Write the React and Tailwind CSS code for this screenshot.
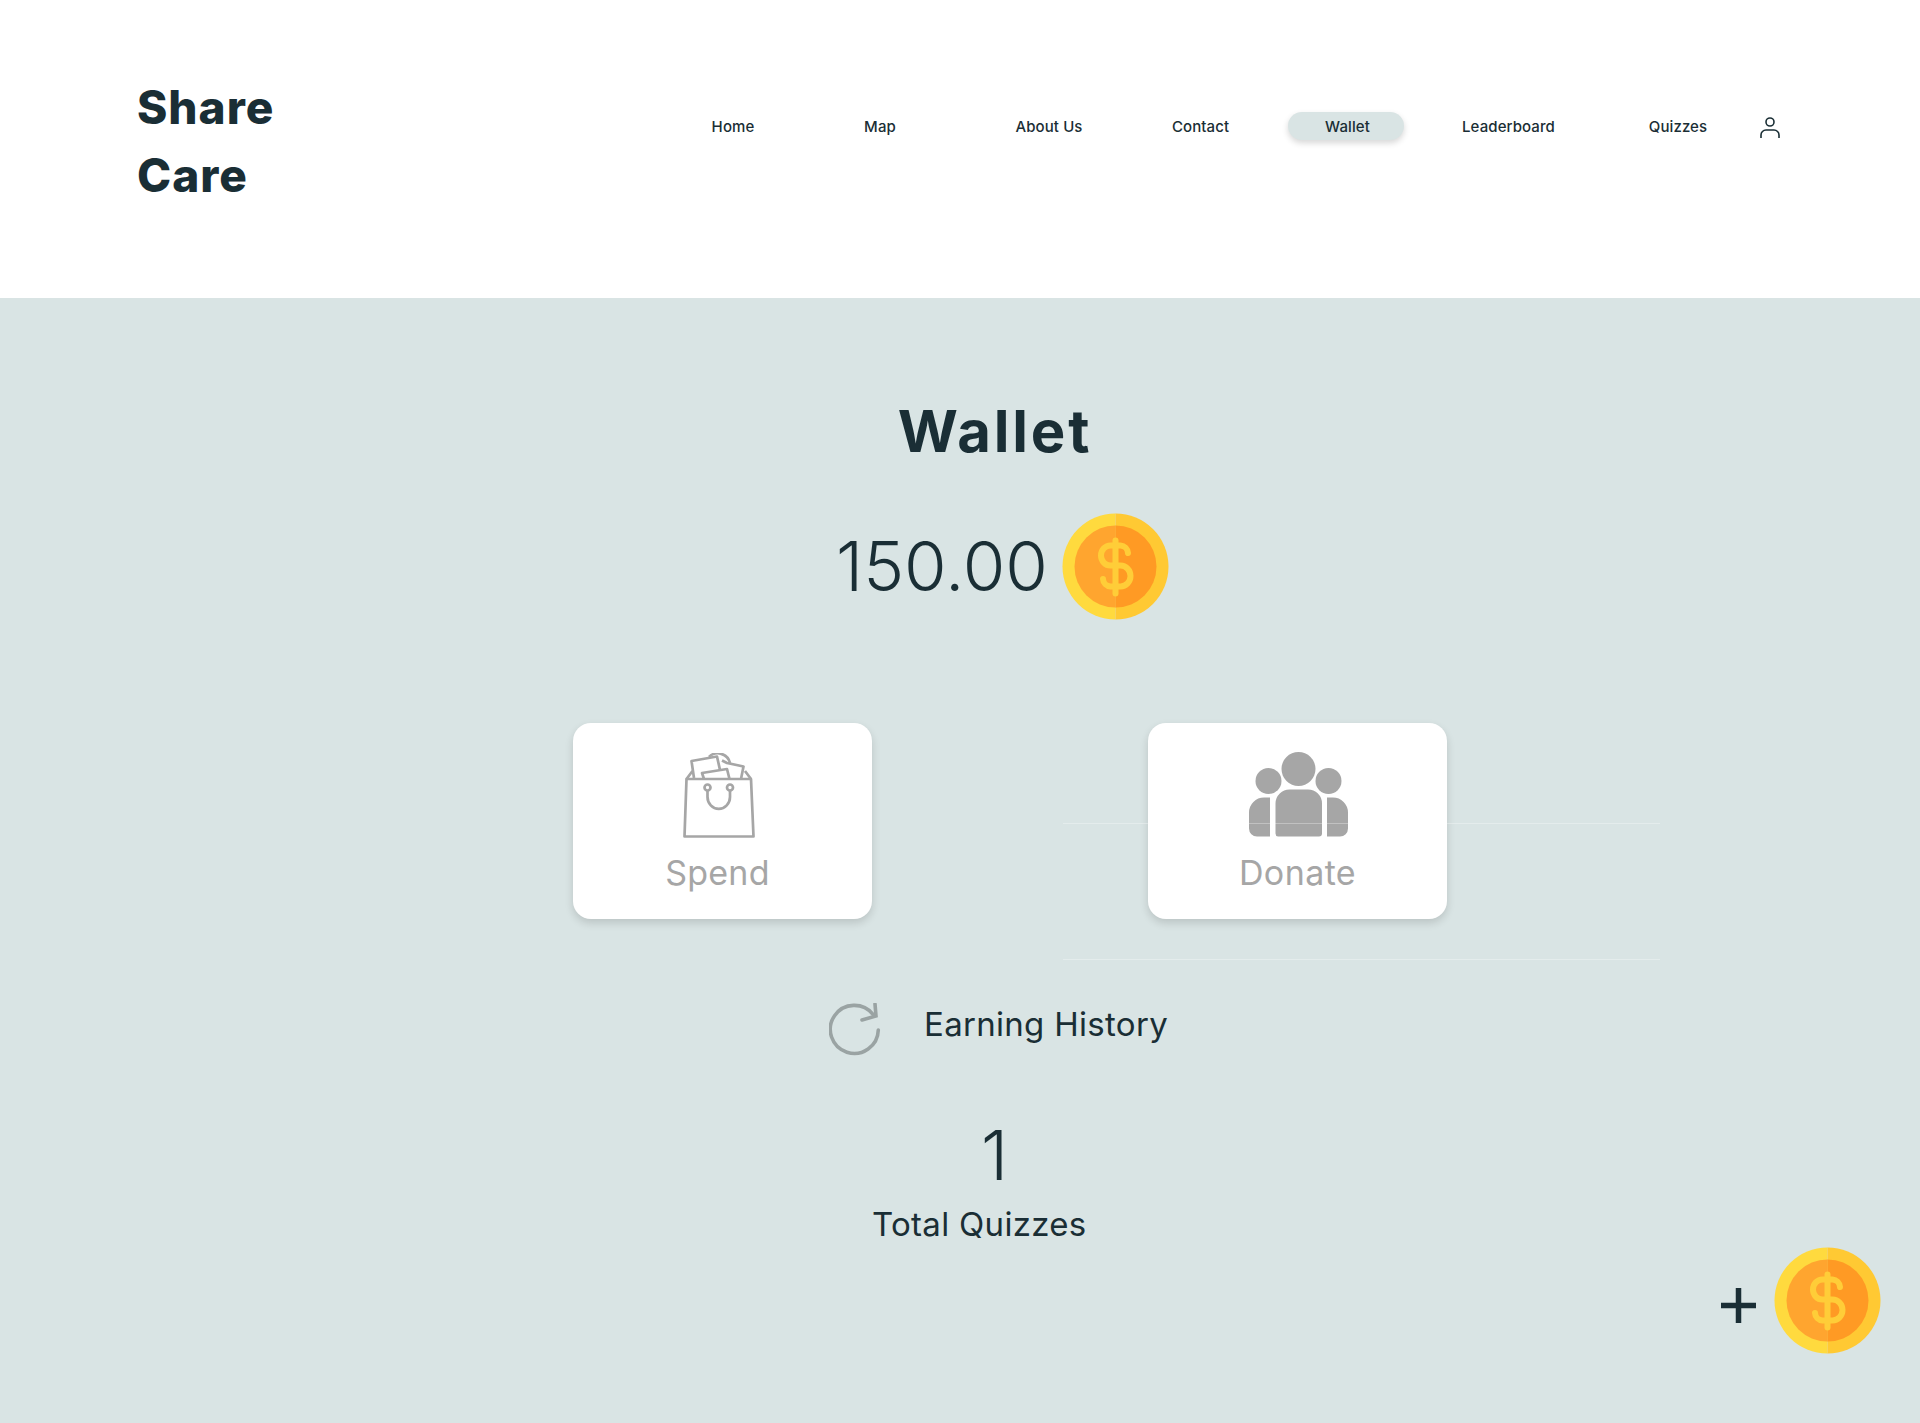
const font = "font-['Inter','Liberation_Sans',sans-serif]";

function Coin({ className }) {
  return (
    <svg viewBox="0 0 107 107" className={className}>
      <path d="M53.500 0.500a53 53 0 0 0 0 106z" fill="#ffda3e" />
      <path d="M53.500 0.500a53 53 0 0 1 0 106z" fill="#ffc933" />
      <path d="M53.500 12.500a41 41 0 0 0 0 82z" fill="#ffa52f" />
      <path d="M53.500 12.500a41 41 0 0 1 0 82z" fill="#ff9a24" />
      <g transform="translate(53.5 53.5)" fill="none" stroke="#ffcd38" strokeWidth="6" strokeLinecap="round">
        <path d="M0 -26V27" />
        <path d="M12.500 -13.500A8 8 0 0 0 5 -21H-5A9.500 10 0 0 0 -5 -1H5A10 10.500 0 0 1 5 20H-5A8 8 0 0 1 -12.500 12.500" />
      </g>
    </svg>
  );
}

function BagIcon() {
  return (
    <svg viewBox="0 0 72 85" className="w-[72px] h-[85px]" fill="none" stroke="#a6a6a6" strokeWidth="2.700" strokeLinejoin="round">
      <path d="M1.500 83.500L3.500 26H68L70.500 83.500Z" />
      <path d="M3.500 26L9.500 18M68 26L62 18" />
      <path d="M11 25L8.500 8L34 3.500L37 17" />
      <path d="M21 26L19 20L44 16L46.500 26" />
      <path d="M39 7.500L44 10L60.500 13.500L58 26" />
      <path d="M26 4A12.500 12.500 0 0 1 47 10" />
      <circle cx="24.500" cy="34.500" r="3" />
      <circle cx="47" cy="34.500" r="3" />
      <path d="M24.500 37.500V44A11.200 11.800 0 0 0 47 44V37.500" />
    </svg>
  );
}

function PeopleIcon() {
  return (
    <svg viewBox="0 0 99 85" className="w-[99px] h-[85px]" fill="#a6a6a6">
      <circle cx="49.500" cy="17" r="17" />
      <circle cx="19.500" cy="29" r="13" />
      <circle cx="79.500" cy="29" r="13" />
      <path d="M41 37.500H59A14 14 0 0 1 73 51.500V81.500A3 3 0 0 1 70 84.500H29A3 3 0 0 1 26.500 81.500V51.500A14 14 0 0 1 41 37.500Z" />
      <path d="M21 45.500V84.500H8A8 8 0 0 1 0 76.500V60.500A15 15 0 0 1 15 45.500Z" />
      <path d="M78 45.500V84.500H91A8 8 0 0 0 99 76.500V60.500A15 15 0 0 0 84 45.500Z" />
    </svg>
  );
}

function RefreshIcon() {
  return (
    <svg viewBox="0 0 52 53" className="w-[52px] h-[53px]" fill="none" stroke="#9aa3a3" strokeWidth="3.600" strokeLinecap="round">
      <path d="M49.300 27A24 24 0 1 1 44 11.300" />
      <path d="M46 1L47 13L33 17" />
    </svg>
  );
}

function UserIcon() {
  return (
    <svg viewBox="0 0 20 22" className="w-5 h-[22px]" fill="none" stroke="#1a2e35" strokeWidth="1.600">
      <circle cx="10" cy="5" r="4" />
      <path d="M1 21V18A5 5 0 0 1 6 13H14A5 5 0 0 1 19 18V21" />
    </svg>
  );
}

function NavItem({ children, className = "" }) {
  return (
    <a className={`flex items-center justify-center h-7 pt-[2px] text-[15px] font-medium text-[#1a2e35] tracking-[0.1px] ${className}`}>
      {children}
    </a>
  );
}

export default function App() {
  return (
    <div className={`${font} w-[1920px] h-[1423px] overflow-hidden bg-white text-[#1a2e35]`}>
      <header className="h-[298px] bg-white flex items-start pl-[137px] pt-[73px]">
        <div className="w-[552px] text-[46px] font-extrabold leading-[68px] tracking-[1px]">
          <div>Share</div>
          <div>Care</div>
        </div>
        <nav className="flex items-center mt-[39px]">
          <NavItem className="w-[88px]">Home</NavItem>
          <NavItem className="w-[206px]">Map</NavItem>
          <NavItem className="w-[130px] pl-[2px]">About Us</NavItem>
          <NavItem className="w-[175px]">Contact</NavItem>
          <NavItem className="w-[116px] pl-[3px] rounded-[14px] bg-[#d9e4e4] shadow-[0_3px_6px_rgba(0,0,0,0.16)]">Wallet</NavItem>
          <NavItem className="w-[209px]">Leaderboard</NavItem>
          <NavItem className="w-[128px] pl-[2px]">Quizzes</NavItem>
          <span className="ml-[19px] mt-1"><UserIcon /></span>
        </nav>
      </header>

      <main className="relative h-[1125px] bg-[#d9e4e4]">
        <h1 className="pl-[70px] pt-[98px] text-center text-[58px] font-bold leading-[70px] tracking-[2.800px]">Wallet</h1>
        <div className="flex items-center pl-[836px] mt-[47px]">
          <span className="w-[226px] text-[69px] font-[350] leading-[107px] tracking-[0px]">150.00</span>
          <Coin className="w-[107px] h-[107px]" />
        </div>
        <div className="flex pl-[573px] gap-[276px] mt-[103px]">
          <button className="w-[299px] h-[196px] rounded-[18px] bg-white shadow-[0_4px_8px_rgba(0,0,0,0.14)] flex flex-col items-center pt-[30px]">
            <span className="-ml-[7px] flex"><BagIcon /></span>
            <span className="-ml-[10px] text-[34px] leading-[50px] mt-[10px] tracking-[0.2px] text-[#a6a6a6]">Spend</span>
          </button>
          <button className="w-[299px] h-[196px] rounded-[18px] bg-white shadow-[0_4px_8px_rgba(0,0,0,0.14)] flex flex-col items-center pt-[29px]">
            <span className="ml-[2px] flex"><PeopleIcon /></span>
            <span className="text-[34px] leading-[50px] mt-[11px] tracking-[0.4px] text-[#a6a6a6]">Donate</span>
          </button>
        </div>
        <div className="flex items-center pl-[829px] mt-[84px]">
          <RefreshIcon />
          <span className="ml-[43px] mb-[12px] text-[33px] leading-[38px] tracking-[0.3px]">Earning History</span>
        </div>
        <div className="pl-[981px] mt-[56px] text-[69px] font-[350] leading-[86px]">1</div>
        <div className="pl-[872px] mt-[1px] text-[33px] leading-[50px] tracking-[0.3px]">Total Quizzes</div>
        <div className="absolute left-[1063px] top-[525px] w-[597px] h-[137px] border-y border-white/30 pointer-events-none" />
        <div className="absolute left-[1721px] top-[949px] flex items-center">
          <span className="relative flex w-[35px] h-[35px] mt-[10px] items-center justify-center">
            <svg viewBox="0 0 35 35" className="w-[35px] h-[35px]" stroke="#1a2e35" strokeWidth="5.500">
              <path d="M0 17.500H35M17.500 0V35" />
            </svg>
          </span>
          <Coin className="ml-[18px] w-[107px] h-[107px]" />
        </div>
      </main>
    </div>
  );
}
